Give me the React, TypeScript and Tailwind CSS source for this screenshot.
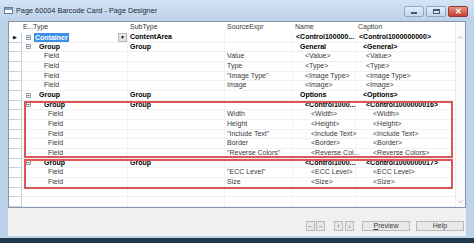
import React from "react";

type Row = {
    type: string;
    sub: string;
    src: string;
    name: string;
    cap: string;
    level: number;
    group: boolean;
};

const rows: Row[] = [
    { type: "Container", sub: "ContentArea", src: "", name: "<Control100000...", cap: "<Control1000000000>", level: 0, group: true },
    { type: "Group", sub: "Group", src: "", name: "General", cap: "<General>", level: 1, group: true },
    { type: "Field", sub: "", src: "Value", name: "<Value>", cap: "<Value>", level: 2, group: false },
    { type: "Field", sub: "", src: "Type", name: "<Type>", cap: "<Type>", level: 2, group: false },
    { type: "Field", sub: "", src: "\"Image Type\"", name: "<Image Type>", cap: "<Image Type>", level: 2, group: false },
    { type: "Field", sub: "", src: "Image", name: "<Image>", cap: "<Image>", level: 2, group: false },
    { type: "Group", sub: "Group", src: "", name: "Options", cap: "<Options>", level: 1, group: true },
    { type: "Group", sub: "Group", src: "", name: "<Control1000...", cap: "<Control1000000016>", level: 2, group: true },
    { type: "Field", sub: "", src: "Width", name: "<Width>", cap: "<Width>", level: 3, group: false },
    { type: "Field", sub: "", src: "Height", name: "<Height>", cap: "<Height>", level: 3, group: false },
    { type: "Field", sub: "", src: "\"Include Text\"", name: "<Include Text>", cap: "<Include Text>", level: 3, group: false },
    { type: "Field", sub: "", src: "Border", name: "<Border>", cap: "<Border>", level: 3, group: false },
    { type: "Field", sub: "", src: "\"Reverse Colors\"", name: "<Reverse Col...", cap: "<Reverse Colors>", level: 3, group: false },
    { type: "Group", sub: "Group", src: "", name: "<Control1000...", cap: "<Control1000000017>", level: 2, group: true },
    { type: "Field", sub: "", src: "\"ECC Level\"", name: "<ECC Level>", cap: "<ECC Level>", level: 3, group: false },
    { type: "Field", sub: "", src: "Size", name: "<Size>", cap: "<Size>", level: 3, group: false },
];

// indent per tree level, type / name / caption columns
const typePad = ["pl-[3px]", "pl-[7px]", "pl-[12px]", "pl-[16px]"];
const namePad = ["pl-[3px]", "pl-[7px]", "pl-[12px]", "pl-[18px]"];
const capPad = ["pl-[3px]", "pl-[7px]", "pl-[10px]", "pl-[17px]"];

function Expander() {
    return (
        <svg width="5" height="5" viewBox="0 0 5 5">
            <rect x="0.5" y="0.5" width="4" height="4" fill="#f4f4f4" stroke="#9aa3ad" strokeWidth="1" />
            <line x1="1.5" y1="2.5" x2="3.5" y2="2.5" stroke="#5a6470" strokeWidth="1" />
        </svg>
    );
}

function Chevron({ up }: { up?: boolean }) {
    return (
        <svg width="5" height="3" viewBox="0 0 5 3">
            <path d={up ? "M0.5 2.5 L2.5 0.5 L4.5 2.5" : "M0.5 0.5 L2.5 2.5 L4.5 0.5"} fill="none" stroke="#b4b4b4" strokeWidth="1" />
        </svg>
    );
}

function GridRow({ row, index }: { row?: Row; index: number }) {
    const bold = row?.group ? "font-bold text-black" : "text-[#3a3a3a]";
    const selected = index === 0;
    return (
        <div className="flex h-[9.67px] items-center">
            <div className="flex h-full w-[13px] shrink-0 items-center justify-center border-b border-r border-[#c9d1da] bg-white">
                {selected && <span className="text-[5px] leading-none text-black">▶</span>}
            </div>
            <div className="flex h-full w-[10px] shrink-0 items-center justify-center border-b border-[#f1f1f1] pl-[2px]">
                {row?.group && <Expander />}
            </div>
            <div className={`flex h-full w-[96px] shrink-0 items-center border-b border-r border-[#f1f1f1] ${row ? typePad[row.level] : ""} ${bold}`}>
                {selected ? (
                    <>
                        <span className="-ml-[1px] bg-[#3b8fe6] px-[1px] leading-[9px] text-white">{row?.type}</span>
                        <span className="ml-auto flex h-[9px] w-[9px] items-center justify-center border border-[#b5b5b5] bg-[#e6e6e6] text-[5px] text-black">▼</span>
                    </>
                ) : (
                    row?.type
                )}
            </div>
            <div className={`flex h-full w-[97px] shrink-0 items-center border-b border-r border-[#f1f1f1] pl-[2px] ${bold}`}>{row?.sub}</div>
            <div className="flex h-full w-[68px] shrink-0 items-center border-b border-r border-[#f1f1f1] pl-[2px] text-[#3a3a3a]">{row?.src}</div>
            <div className={`flex h-full w-[63px] shrink-0 items-center whitespace-nowrap border-b border-r border-[#f1f1f1] ${row ? namePad[row.level] : ""} ${bold}`}>{row?.name}</div>
            <div className={`flex h-full w-[99px] shrink-0 items-center whitespace-nowrap border-b border-[#f1f1f1] ${row ? capPad[row.level] : ""} ${bold}`}>{row?.cap}</div>
        </div>
    );
}

function Marked({ children, className }: { children: React.ReactNode; className: string }) {
    return (
        <div className="relative">
            {children}
            <div className={`pointer-events-none absolute left-[15px] right-[2px] border-2 border-[#dd5656] ${className}`} />
        </div>
    );
}

function CaptionButton({ kind }: { kind: "min" | "max" | "close" }) {
    if (kind === "close") {
        return (
            <div className="flex h-[11px] w-[20px] items-center justify-center rounded-[2px] border border-[#8e3a32] bg-gradient-to-b from-[#e8917f] to-[#c43c2b]">
                <span className="text-[8px] font-bold leading-none text-white">✕</span>
            </div>
        );
    }
    return (
        <div className="flex h-[11px] w-[20px] items-center justify-center rounded-[2px] border border-[#8ea8c6] bg-gradient-to-b from-[#e3eef9] to-[#c3d6eb]">
            {kind === "min" ? (
                <span className="mt-[3px] h-[2px] w-[6px] bg-[#4a5a6c]" />
            ) : (
                <span className="h-[5px] w-[7px] border border-t-2 border-[#4a5a6c]" />
            )}
        </div>
    );
}

function SmallButton({ children }: { children: React.ReactNode }) {
    return (
        <div className="flex h-[10px] w-[9px] items-center justify-center border border-[#b8b8b8] bg-[#e8e8e8] text-[6px] font-bold leading-none text-[#1c3a7a]">
            {children}
        </div>
    );
}

export default function App() {
    return (
        <div className="flex h-[243px] w-[474px] flex-col overflow-hidden bg-[#bcd2ea] font-[Liberation_Sans,Arial,sans-serif] text-[7px]">
            {/* title bar */}
            <div className="flex h-[21px] shrink-0 items-start bg-gradient-to-b from-[#d3e3f4] to-[#bcd2ea] pl-[4px] pr-[6px]">
                <div className="mt-[7px] flex h-[7px] w-[9px] flex-col border border-[#6b7b8c] bg-white">
                    <div className="h-[2px] bg-[#7f9cc0]" />
                </div>
                <span className="ml-[3px] mt-[6px] text-[7.3px] text-[#1e2a36]">Page 60004 Barcode Card - Page Designer</span>
                <div className="ml-auto mt-[6px] flex gap-[2px]">
                    <CaptionButton kind="min" />
                    <CaptionButton kind="max" />
                    <CaptionButton kind="close" />
                </div>
            </div>

            <div className="mx-[8px] flex flex-1 flex-col">
                {/* grid */}
                <div className="flex h-[187px] shrink-0 border border-[#8796a8] bg-white">
                    <div className="flex w-[446px] flex-col">
                        <div className="flex h-[11px] items-center text-[#3a3a3a]">
                            <div className="w-[13px] shrink-0" />
                            <div className="w-[10px] shrink-0 pl-[1px]">E...</div>
                            <div className="w-[96px] shrink-0 pl-[1px]">Type</div>
                            <div className="w-[97px] shrink-0 pl-[2px]">SubType</div>
                            <div className="w-[68px] shrink-0 pl-[2px]">SourceExpr</div>
                            <div className="w-[63px] shrink-0 pl-[2px]">Name</div>
                            <div className="w-[99px] shrink-0 pl-[2px]">Caption</div>
                        </div>
                        {rows.slice(0, 7).map((r, i) => (
                            <GridRow key={i} row={r} index={i} />
                        ))}
                        <Marked className="top-0 bottom-[1px]">
                            {rows.slice(7, 13).map((r, i) => (
                                <GridRow key={i} row={r} index={i + 7} />
                            ))}
                        </Marked>
                        <Marked className="top-0 -bottom-[1px]">
                            {rows.slice(13).map((r, i) => (
                                <GridRow key={i} row={r} index={i + 13} />
                            ))}
                        </Marked>
                        <GridRow index={16} />
                        <GridRow index={17} />
                    </div>
                    {/* scrollbar */}
                    <div className="flex flex-1 flex-col items-center justify-between border-l border-[#ececec] bg-[#fafafa] pb-[4px] pt-[14px]">
                        <Chevron up />
                        <Chevron />
                    </div>
                </div>

                {/* footer */}
                <div className="flex flex-1 items-end justify-end bg-[#f0f0f0] pb-[5px] pr-[2px]">
                    <div className="flex items-center">
                        <SmallButton>←</SmallButton>
                        <div className="ml-[1px]">
                            <SmallButton>→</SmallButton>
                        </div>
                        <div className="ml-[9px]">
                            <SmallButton>↑</SmallButton>
                        </div>
                        <div className="ml-[2px]">
                            <SmallButton>↓</SmallButton>
                        </div>
                        <div className="ml-[8px] flex h-[10px] w-[48px] items-center justify-center border border-[#b8b8b8] bg-[#e8e8e8] text-[#3a3a3a]">
                            <span><span className="underline">P</span>review</span>
                        </div>
                        <div className="ml-[6px] flex h-[10px] w-[48px] items-center justify-center border border-[#b8b8b8] bg-[#e8e8e8] text-[#3a3a3a]">
                            Help
                        </div>
                    </div>
                </div>
            </div>
            <div className="h-[2px] shrink-0" />
            <div className="h-[5px] shrink-0 bg-[#1f3a4b]" />
        </div>
    );
}
